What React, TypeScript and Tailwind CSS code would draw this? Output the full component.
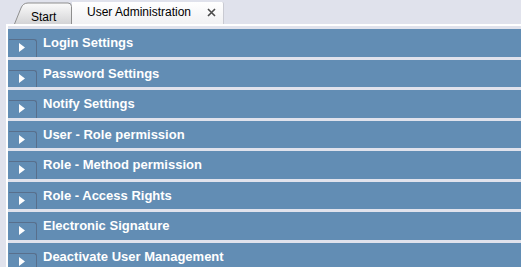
const sections = [
  "Login Settings",
  "Password Settings",
  "Notify Settings",
  "User - Role permission",
  "Role - Method permission",
  "Role - Access Rights",
  "Electronic Signature",
  "Deactivate User Management",
];

function StartTab() {
  return (
    <div className="relative w-[59px] h-[22px]">
      <svg className="absolute inset-0" width="59" height="22" viewBox="0 0 59 22">
        <defs>
          <linearGradient id="startGrad" x1="0" y1="0" x2="0" y2="1">
            <stop offset="0" stopColor="#fbfbfb" />
            <stop offset="1" stopColor="#d4d4d6" />
          </linearGradient>
        </defs>
        <path
          d="M0.5 22 L7 6 Q9 1 14 1 L54 1 Q57.5 1 57.5 4.5 L57.5 22"
          fill="url(#startGrad)"
          stroke="#8e8e8e"
          strokeWidth="1"
        />
      </svg>
      <span className="absolute left-[17px] top-[8px] text-[12px] leading-[14px] text-black">Start</span>
    </div>
  );
}

function ActiveTab() {
  return (
    <div className="-ml-[1px] w-[152px] h-[22px] flex items-start pt-[3px] pl-[15px] bg-gradient-to-b from-white to-[#f1f1f3] border-r border-[#c9cad2] rounded-tr-[2px]">
      <span className="text-[12px] leading-[14px] text-black">User Administration</span>
      <svg className="ml-auto mr-[7px] mt-[3px]" width="9" height="9" viewBox="0 0 9 9">
        <path d="M1 1 L8 8 M8 1 L1 8" stroke="#4a4a4a" strokeWidth="1.6" />
      </svg>
    </div>
  );
}

function SectionRow({ title }: { title: string }) {
  return (
    <div className="h-[27.5px] bg-[#628db4] flex items-stretch">
      <div className="ml-[1px] mt-[10px] w-[28px] border-t border-r border-[#586f8c] rounded-tr-[3px] flex items-start pt-[3px] pl-[10px]">
        <svg width="6" height="9" viewBox="0 0 6 9">
          <path d="M0 0 L6 4.5 L0 9 Z" fill="#ffffff" />
        </svg>
      </div>
      <div className="ml-[6px] flex items-center text-white font-bold text-[13px] leading-none whitespace-nowrap">
        {title}
      </div>
    </div>
  );
}

export default function App() {
  return (
    <div
      className="w-[521px] h-[267px] overflow-hidden bg-[#e0e2ec]"
      style={{ fontFamily: '"Liberation Sans", Arial, sans-serif' }}
    >
      <div className="h-[24px] flex items-end pl-[14px]">
        <StartTab />
        <ActiveTab />
      </div>
      <div className="ml-[6px] border-t-2 border-l-2 border-white pt-[3px] flex flex-col gap-[3px]">
        {sections.map(s => (
          <SectionRow key={s} title={s} />
        ))}
      </div>
    </div>
  );
}
